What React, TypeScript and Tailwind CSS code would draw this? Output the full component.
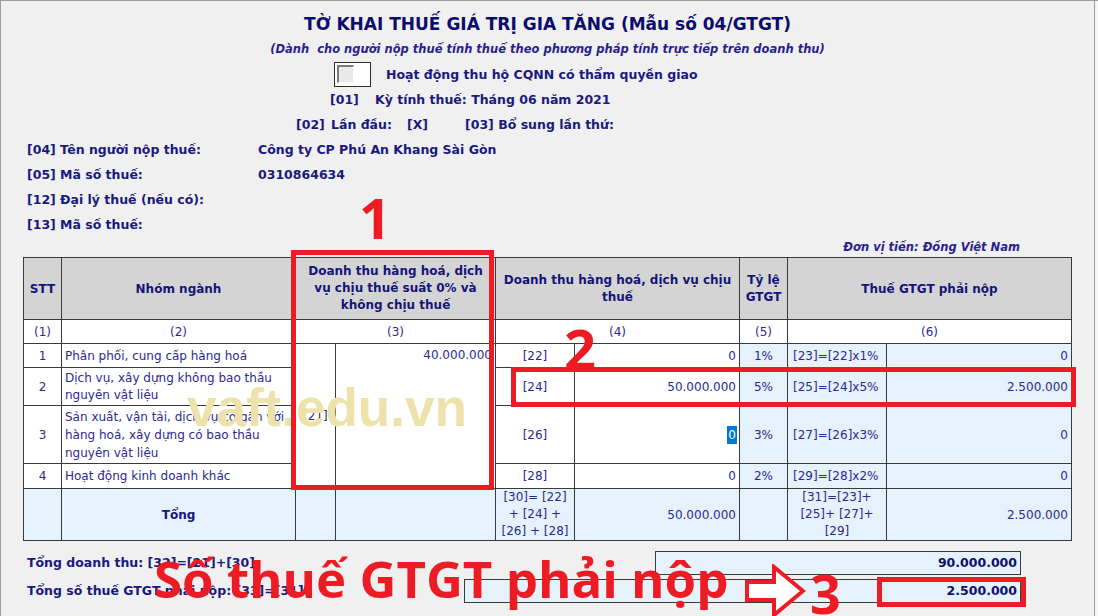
import React from "react";

type CP = { children?: React.ReactNode; className?: string };

const Cell = ({ children, className = "" }: CP) => (
  <div className={`flex overflow-visible whitespace-nowrap ${className}`}>{children}</div>
);

const W = "bg-white";
const B = "bg-[#e5f1fb]";
const H = "bg-[#d4d4d4]";

export default function App() {
  return (
    <div className="relative flex h-[616px] w-[1098px] overflow-hidden border-l border-t border-[#9c9c9c] bg-[#f0f0f0] font-['DejaVu_Sans',sans-serif] text-[#1a1a7e]">
      <div className="flex w-[1093px] flex-col">
        {/* Title */}
        <div className="mt-[12px] h-[22px] text-center text-[17px] font-bold leading-[22px] text-[#0c0c6c]">
          TỜ KHAI THUẾ GIÁ TRỊ GIA TĂNG (Mẫu số 04/GTGT)
        </div>
        <div className="mt-[4px] h-[20px] text-center text-[11.5px] font-bold italic leading-[20px] text-[#2a1f8e]">
          (Dành&nbsp; cho người nộp thuế tính thuế theo phương pháp tính trực tiếp trên doanh thu)
        </div>
        {/* checkbox row */}
        <div className="mt-[4px] flex h-[25px] items-center pl-[333px] text-[12.5px] font-bold">
          <div className="-mt-[3px] flex h-[25px] w-[37px] items-start border border-[#2e2e2e] bg-white p-[2px]">
            <div className="h-[18px] w-[17px] border-l-2 border-t-2 border-b border-r border-l-[#7a7a7a] border-t-[#7a7a7a] border-b-[#ffffff] border-r-[#ffffff] bg-[#e9e9e9]" />
          </div>
          <span className="ml-[15px]">Hoạt động thu hộ CQNN có thẩm quyền giao</span>
        </div>
        {/* [01] */}
        <div className="flex h-[25px] items-center pl-[329px] text-[12.5px] font-bold">
          <span className="w-[45px]">[01]</span>
          <span>Kỳ tính thuế: Tháng 06 năm 2021</span>
        </div>
        {/* [02] */}
        <div className="flex h-[25px] items-center pl-[295px] text-[12.5px] font-bold">
          <span className="w-[35px]">[02]</span>
          <span className="w-[76px]">Lần đầu:</span>
          <span className="w-[58px]">[X]</span>
          <span>[03] Bổ sung lần thứ:</span>
        </div>
        {/* labels */}
        <div className="flex flex-col pl-[26px] text-[12.5px] font-bold">
          {[
            ["[04]", "Tên người nộp thuế:", "Công ty CP Phú An Khang Sài Gòn"],
            ["[05]", "Mã số thuế:", "0310864634"],
            ["[12]", "Đại lý thuế (nếu có):", ""],
            ["[13]", "Mã số thuế:", ""],
          ].map(([a, b, c]) => (
            <div key={a} className="flex h-[25px] items-center">
              <span className="w-[33px]">{a}</span>
              <span className="w-[198px]">{b}</span>
              <span>{c}</span>
            </div>
          ))}
        </div>
        <div className="h-[19px] pr-[74px] text-right text-[11.5px] font-bold italic leading-[19px] text-[#2a1f8e]">
          Đơn vị tiền: Đồng Việt Nam
        </div>

        {/* Table */}
        <div className="ml-[22px] grid w-fit grid-cols-[37px_233px_39px_159px_78px_164px_47px_98px_184px] grid-rows-[61px_23px_23px_37px_57px_24px_51px] gap-px bg-[#3a3a3a] p-px text-[12px] text-[#2a2a92]">
          {/* header */}
          <Cell className={`${H} items-center justify-center font-bold text-[#14147a]`}>STT</Cell>
          <Cell className={`${H} items-center justify-center font-bold text-[#14147a]`}>Nhóm ngành</Cell>
          <Cell className={`${H} col-span-2 items-center justify-center text-center font-bold leading-[17px] text-[#14147a]`}>
            <span>
              Doanh thu hàng hoá, dịch
              <br />
              vụ chịu thuế suất 0% và
              <br />
              không chịu thuế
            </span>
          </Cell>
          <Cell className={`${H} col-span-2 items-center justify-center text-center font-bold leading-[17px] text-[#14147a]`}>
            <span>
              Doanh thu hàng hoá, dịch vụ chịu
              <br />
              thuế
            </span>
          </Cell>
          <Cell className={`${H} items-center justify-center text-center font-bold leading-[17px] text-[#14147a]`}>
            <span>
              Tỷ lệ
              <br />
              GTGT
            </span>
          </Cell>
          <Cell className={`${H} col-span-2 items-center justify-center font-bold text-[#14147a]`}>Thuế GTGT phải nộp</Cell>

          {/* numbering */}
          <Cell className={`${W} items-center justify-center`}>(1)</Cell>
          <Cell className={`${W} items-center justify-center`}>(2)</Cell>
          <Cell className={`${W} col-span-2 items-center justify-center`}>(3)</Cell>
          <Cell className={`${W} col-span-2 items-center justify-center`}>(4)</Cell>
          <Cell className={`${W} items-center justify-center`}>(5)</Cell>
          <Cell className={`${W} col-span-2 items-center justify-center`}>(6)</Cell>

          {/* row 1 */}
          <Cell className={`${W} items-center justify-center`}>1</Cell>
          <Cell className={`${W} items-center pl-[3px]`}>Phân phối, cung cấp hàng hoá</Cell>
          <Cell className={`${W} row-span-4 items-center justify-center`}>[21]</Cell>
          <Cell className={`${W} row-span-4 items-start justify-end pr-[3px]`}>
            <span className="leading-[23px]">40.000.000</span>
          </Cell>
          <Cell className={`${W} items-center justify-center`}>[22]</Cell>
          <Cell className={`${W} items-center justify-end pr-[3px]`}>0</Cell>
          <Cell className={`${B} items-center justify-center`}>1%</Cell>
          <Cell className={`${B} items-center pl-[5px]`}>[23]=[22]x1%</Cell>
          <Cell className={`${B} items-center justify-end pr-[3px]`}>0</Cell>

          {/* row 2 */}
          <Cell className={`${W} items-center justify-center`}>2</Cell>
          <Cell className={`${W} items-center pl-[3px] leading-[17px]`}>
            <span>
              Dịch vụ, xây dựng không bao thầu
              <br />
              nguyên vật liệu
            </span>
          </Cell>
          <Cell className={`${W} items-center justify-center`}>[24]</Cell>
          <Cell className={`${W} items-center justify-end pr-[3px]`}>50.000.000</Cell>
          <Cell className={`${B} items-center justify-center`}>5%</Cell>
          <Cell className={`${B} items-center pl-[5px]`}>[25]=[24]x5%</Cell>
          <Cell className={`${B} items-center justify-end pr-[3px]`}>2.500.000</Cell>

          {/* row 3 */}
          <Cell className={`${W} items-center justify-center`}>3</Cell>
          <Cell className={`${W} items-center pl-[3px] leading-[18px]`}>
            <span>
              Sản xuất, vận tải, dịch vụ có gắn với
              <br />
              hàng hoá, xây dựng có bao thầu
              <br />
              nguyên vật liệu
            </span>
          </Cell>
          <Cell className={`${W} items-center justify-center`}>[26]</Cell>
          <Cell className={`${W} items-center justify-end pr-[2px]`}>
            <span className="bg-[#0078d7] px-[1px] text-white">0</span>
          </Cell>
          <Cell className={`${B} items-center justify-center`}>3%</Cell>
          <Cell className={`${B} items-center pl-[5px]`}>[27]=[26]x3%</Cell>
          <Cell className={`${B} items-center justify-end pr-[3px]`}>0</Cell>

          {/* row 4 */}
          <Cell className={`${W} items-center justify-center`}>4</Cell>
          <Cell className={`${W} items-center pl-[3px]`}>Hoạt động kinh doanh khác</Cell>
          <Cell className={`${W} items-center justify-center`}>[28]</Cell>
          <Cell className={`${W} items-center justify-end pr-[3px]`}>0</Cell>
          <Cell className={`${B} items-center justify-center`}>2%</Cell>
          <Cell className={`${B} items-center pl-[5px]`}>[29]=[28]x2%</Cell>
          <Cell className={`${B} items-center justify-end pr-[3px]`}>0</Cell>

          {/* total */}
          <Cell className={B} />
          <Cell className={`${B} items-center justify-center font-bold text-[#14147a]`}>Tổng</Cell>
          <Cell className={B} />
          <Cell className={B} />
          <Cell className={`${B} items-center justify-center text-center leading-[17px]`}>
            <span>
              [30]= [22]
              <br />+ [24] +
              <br />
              [26] + [28]
            </span>
          </Cell>
          <Cell className={`${B} items-center justify-end pr-[3px]`}>50.000.000</Cell>
          <Cell className={B} />
          <Cell className={`${B} items-center justify-center text-center leading-[17px]`}>
            <span>
              [31]=[23]+
              <br />
              [25]+ [27]+
              <br />
              [29]
            </span>
          </Cell>
          <Cell className={`${B} items-center justify-end pr-[3px]`}>2.500.000</Cell>
        </div>

        {/* totals below */}
        <div className="mt-[10px] flex h-[24px] items-center pl-[26px] text-[12.5px] font-bold">
          <span className="w-[628px]">Tổng doanh thu: [32]=[21]+[30]</span>
          <div className="flex h-[24px] w-[366px] items-center justify-end border border-[#3a3a3a] bg-[#e5f1fb] pr-[3px] text-[#10106a]">
            90.000.000
          </div>
        </div>
        <div className="mt-[4px] flex h-[24px] items-center pl-[26px] text-[12.5px] font-bold">
          <span className="w-[437px]">Tổng số thuế GTGT phải nộp: [33]=[31]</span>
          <div className="flex h-[24px] w-[557px] items-center justify-end border border-[#3a3a3a] bg-[#e5f1fb] pr-[3px] text-[#10106a]">
            2.500.000
          </div>
        </div>
      </div>
      <div className="w-[4px] border-l border-[#9c9c9c] bg-[#f7f7f7]" />

      {/* watermark */}
      <div className="pointer-events-none absolute left-[186px] top-[380px] font-['Liberation_Sans',sans-serif] text-[53px] font-bold leading-[53px] text-[#eee2ab]">
        vaft.edu.vn
      </div>

      {/* annotations */}
      <div className="pointer-events-none absolute left-[290px] top-[249px] h-[240px] w-[203px] border-[5px] border-[#ed1c24]" />
      <div className="pointer-events-none absolute left-[510px] top-[366px] h-[40px] w-[565px] border-[5px] border-[#ed1c24]" />
      <div className="pointer-events-none absolute left-[876px] top-[576px] h-[30px] w-[149px] border-[5px] border-[#ed1c24]" />
      <div className="pointer-events-none absolute left-[358px] top-[188px] font-['Open_Sans',sans-serif] text-[56px] font-bold leading-[56px] text-[#ed1c24]">
        1
      </div>
      <div className="pointer-events-none absolute left-[563px] top-[319px] font-['Open_Sans',sans-serif] text-[56px] font-bold leading-[56px] text-[#ed1c24]">
        2
      </div>
      <div className="pointer-events-none absolute left-[809px] top-[565px] font-['Open_Sans',sans-serif] text-[54px] font-bold leading-[54px] text-[#ed1c24]">
        3
      </div>
      <div className="pointer-events-none absolute left-[153px] top-[552px] whitespace-nowrap font-['Open_Sans',sans-serif] text-[51px] font-bold leading-[51px] text-[#ed1c24]">
        Số thuế GTGT phải nộp
      </div>
      <svg className="pointer-events-none absolute left-[743px] top-[563px]" width="62" height="54" viewBox="0 0 62 54">
        <polygon points="3,18 30,18 30,3 59,27 30,51 30,36 3,36" fill="#ffffff" stroke="#ed1c24" strokeWidth="4" strokeLinejoin="miter" />
      </svg>
    </div>
  );
}
